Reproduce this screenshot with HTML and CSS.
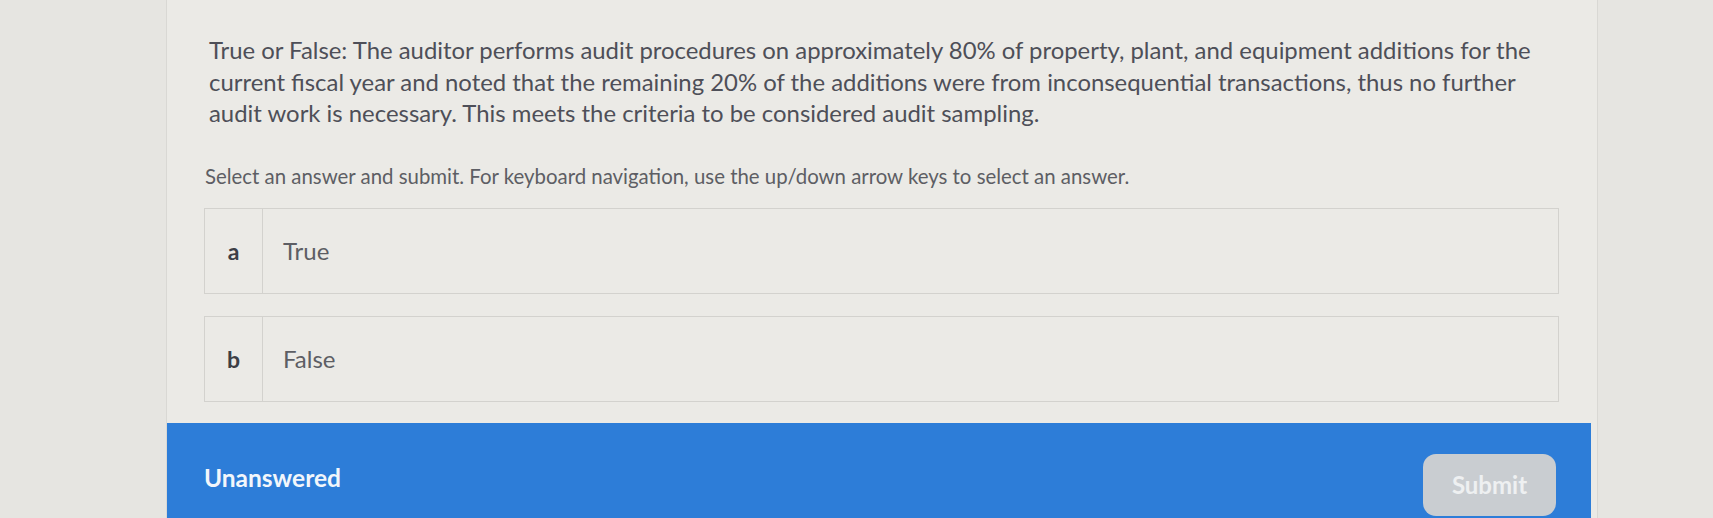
FILE: index.html
```html
<!DOCTYPE html>
<html lang="en">
<head>
<meta charset="utf-8">
<title>Question</title>
<link rel="stylesheet" href="styles.css">
</head>
<body>
<div class="page">
  <main class="content">
    <p class="question">True or False: The auditor performs audit procedures on approximately 80% of property, plant, and equipment additions for the current fiscal year and noted that the remaining 20% of the additions were from inconsequential transactions, thus no further audit work is necessary. This meets the criteria to be considered audit sampling.</p>
    <p class="hint">Select an answer and submit. For keyboard navigation, use the up/down arrow keys to select an answer.</p>
    <div class="options">
      <div class="option"><span class="letter">a</span><span class="label">True</span></div>
      <div class="option"><span class="letter">b</span><span class="label">False</span></div>
    </div>
  </main>
  <footer class="bar">
    <span class="status">Unanswered</span>
    <button class="submit" disabled>Submit</button>
  </footer>
</div>
</body>
</html>
```

FILE: styles.css
```css
html, body {
  margin: 0;
  padding: 0;
  height: 100%;
}
body {
  background: #e6e5e1;
  font-family: Lato, "Open Sans", sans-serif;
  overflow: hidden;
}
.page {
  margin-left: 166px;
  width: 1432px;
  height: 100%;
  box-sizing: border-box;
  background: #ebeae6;
  border-left: 1px solid #d9d8d4;
  border-right: 1px solid #d9d8d4;
  display: flex;
  flex-direction: column;
}
.content {
  padding: 34px 0 0 42px;
}
.question {
  margin: 0;
  width: 1350px;
  font-size: 23.9px;
  line-height: 31.5px;
  color: #4e4f58;
}
.hint {
  margin: 35px 0 0 -4px;
  font-size: 20.4px;
  line-height: 24px;
  color: #5d5e64;
}
.options {
  margin: 20px 0 0 -5px;
  width: 1355px;
  display: flex;
  flex-direction: column;
  gap: 22px;
}
.option {
  display: flex;
  height: 86px;
  border: 1px solid #d3d2ce;
  box-sizing: border-box;
}
.letter {
  width: 57px;
  border-right: 1px solid #d3d2ce;
  display: flex;
  align-items: center;
  justify-content: center;
  font-size: 23px;
  font-weight: 700;
  color: #3d3e45;
}
.label {
  display: flex;
  align-items: center;
  padding-left: 20px;
  font-size: 24px;
  color: #5d5e64;
}
.bar {
  margin-top: 21px;
  width: 1424px;
  flex: 1;
  background: #2d7dd8;
  display: flex;
  justify-content: space-between;
  align-items: flex-start;
  padding: 31px 35px 0 37px;
  box-sizing: border-box;
}
.status {
  color: #f2f6fb;
  font-size: 24.5px;
  font-weight: 700;
  margin-top: 9px;
}
.submit {
  width: 133px;
  height: 62px;
  border: none;
  border-radius: 13px;
  background: #c9cdd1;
  color: #eef0f1;
  font-family: Lato, "Open Sans", sans-serif;
  font-size: 24px;
  font-weight: 700;
}
```
